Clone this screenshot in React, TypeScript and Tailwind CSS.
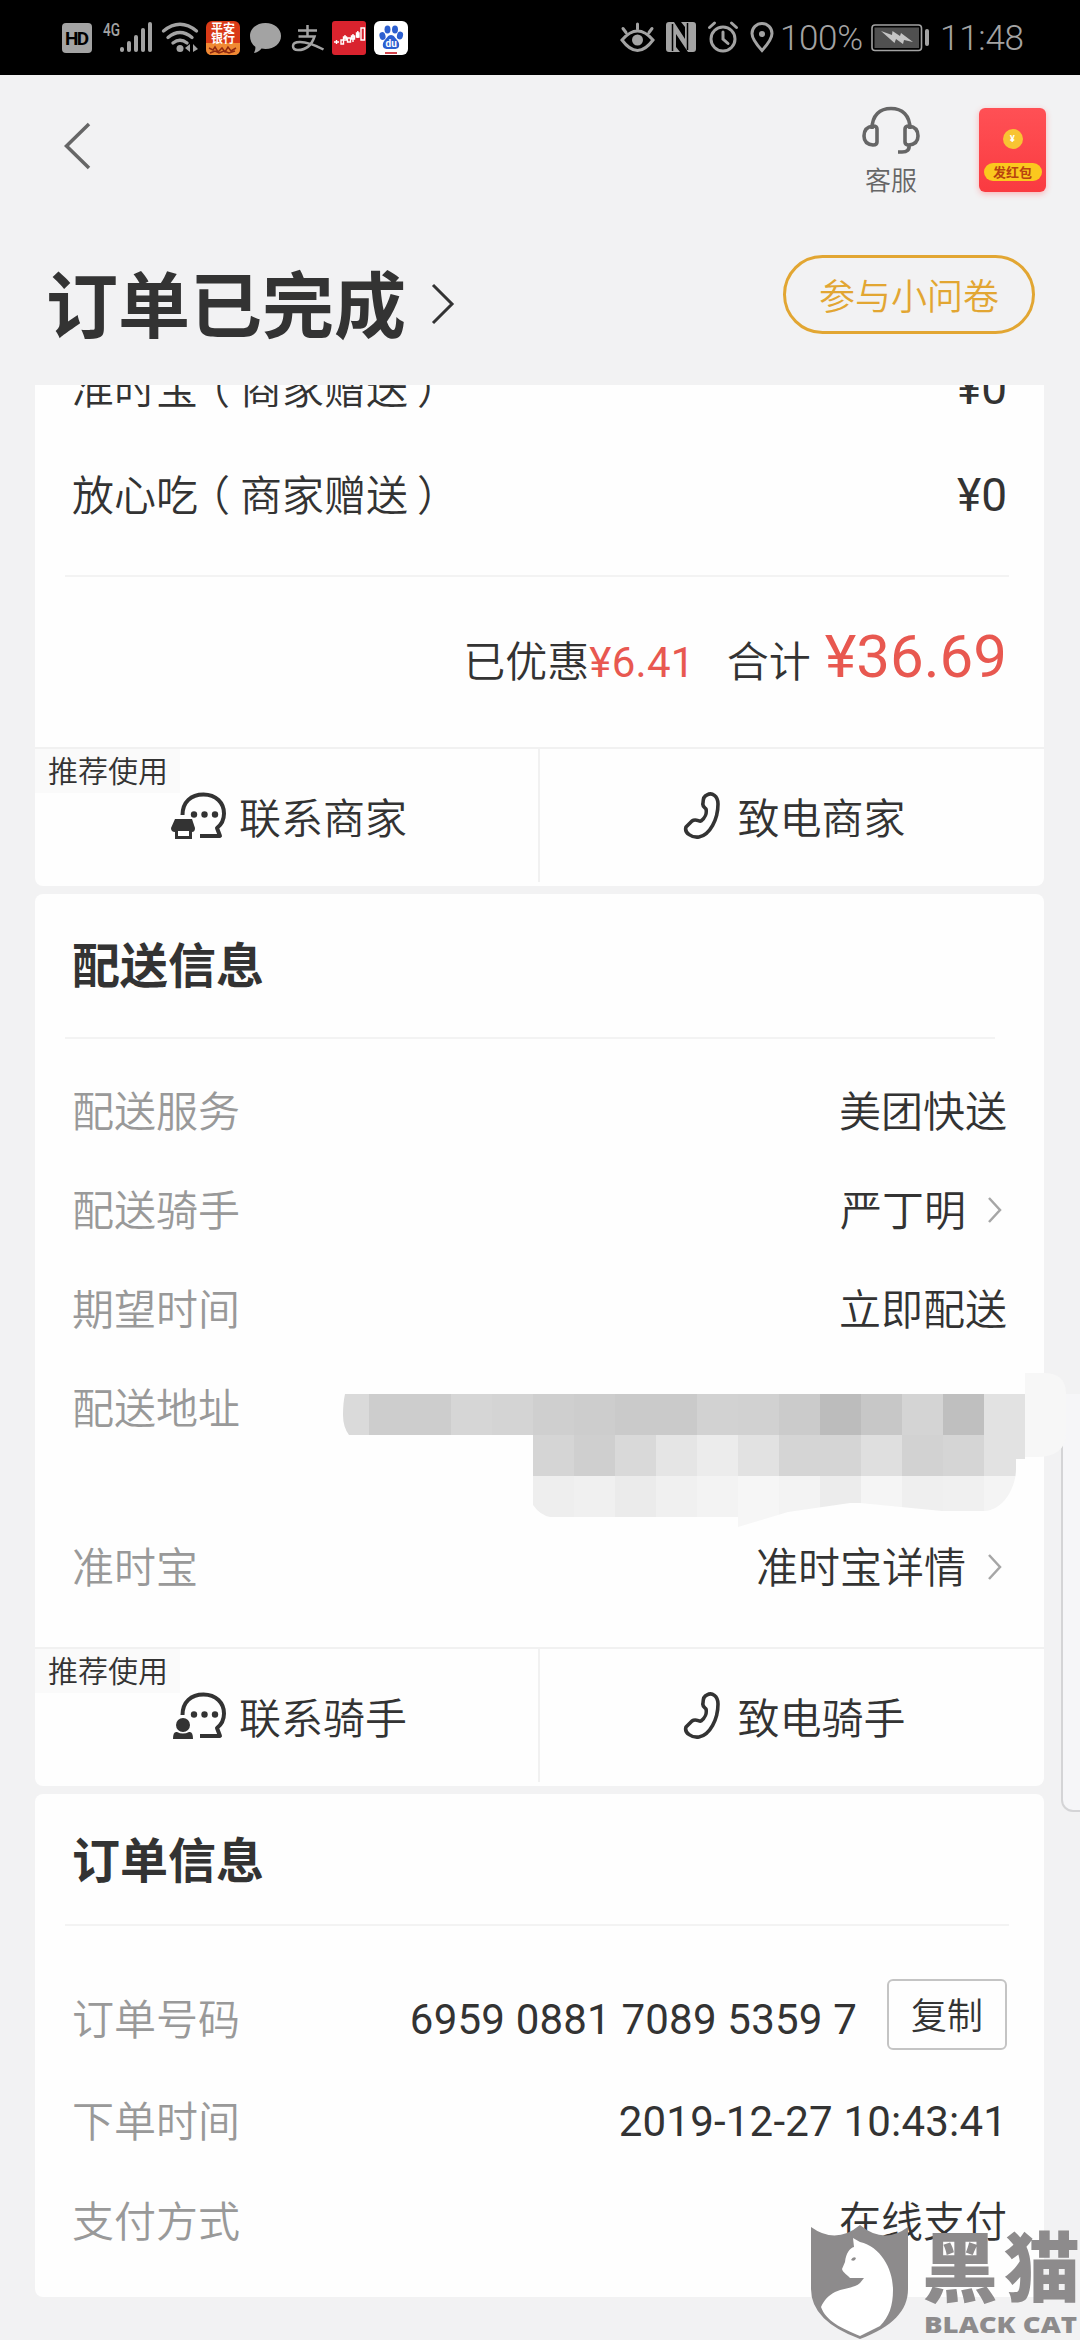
import type { ReactNode } from 'react';

type RowProps = { label: string; value?: string; arrow?: boolean; className: string };

const mosaic: string[][] = [
  ['#dadada', '#cdcdcd', '#cdcdcd', '#d6d6d6', '#d4d4d4', '#cfcfcf', '#cdcdcd', '#cacaca', '#cacaca', '#d2d2d2', '#d1d1d1', '#cbcbcb', '#bcbcbc', '#c7c7c7', '#d4d4d4', '#bfbfbf', '#e2e2e2'],
  ['', '', '', '', '', '#d5d5d5', '#cfcfcf', '#d9d9d9', '#e5e5e5', '#ececec', '#e2e2e2', '#d5d5d5', '#d5d5d5', '#dfdfdf', '#d2d2d2', '#d5d5d5', '#e2e2e2'],
  ['', '', '', '', '', '#eeeeee', '#f0f0f0', '#ebebeb', '#f0f0f0', '#f3f3f3', '#f6f6f6', '#f3f3f3', '#ececec', '#f5f5f5', '#efefef', '#f0f0f0', '#f4f4f4'],
];

function StatusBar() {
  return (
    <div className="flex h-[75px] shrink-0 bg-black text-[#a3a3a3]">
      <svg width="540" height="75" viewBox="0 0 540 75" fill="currentColor">
        <rect x="62" y="23" width="30" height="30" rx="4" />
        <text x="65" y="45" fontFamily="Roboto" fontSize="19" fontWeight="700" fill="#000" textLength="24">HD</text>
        <text x="103" y="36" fontFamily="Roboto" fontSize="19" fontWeight="500" textLength="17" lengthAdjust="spacingAndGlyphs">4G</text>
        <rect x="120" y="47" width="4" height="5" rx="2" />
        <rect x="127" y="41" width="4" height="11" rx="2" />
        <rect x="134" y="35" width="4" height="17" rx="2" />
        <rect x="141" y="28" width="4" height="24" rx="2" />
        <rect x="148" y="22" width="4" height="30" rx="2" />
        <g fill="none" stroke="currentColor" strokeWidth="3.4" strokeLinecap="round">
          <path d="M163.500 31 Q180 17.500 196.500 31" />
          <path d="M168 37.500 Q180 27.500 192 37.500" />
          <path d="M173 43 Q180 37.500 187 43" />
        </g>
        <circle cx="180" cy="48.500" r="3.500" />
        <path d="M190 44v8l-5-4zM193 44v8l5-3z" />
        <rect x="206" y="21" width="34" height="34" rx="6" fill="#d93a17" />
        <path d="M206 43h34v6q0 6-6 6h-22q-6 0-6-6z" fill="#f08a34" />
        <g fontFamily="Noto Sans CJK SC" fontWeight="700" fontSize="12" fill="#fff">
          <text x="211" y="32.500">平安</text>
          <text x="211" y="43">银行</text>
        </g>
        <path d="M209 48l4 2 2-3 3 5 4-4 3 4 3-5 3 4 5-3M210 53l5-2 4 2 5-2 5 2 6-2" fill="none" stroke="#8f2810" strokeWidth="1.500" />
        <path d="M265.500 23c9 0 15.500 5.700 15.500 13s-6.500 13-15.500 13q-2 0-4-.4-3 4-7.500 4.400 1.800-3 1.300-6.300Q250 43 250 36c0-7.300 6.500-13 15.500-13z" />
        <g fill="none" stroke="currentColor" strokeWidth="2.500">
          <path d="M298 30.500h19M307.500 25v11.500M298.500 36.500h16Q310 50 298 50q-5 0-5-4t7-4q9 0 23.500 7.500" />
        </g>
        <rect x="332" y="21" width="34" height="34" rx="3" fill="#d9232e" />
        <g stroke="#fff" strokeWidth="1.400" fill="none">
          <path d="M334 42h5M336.500 40v4M341 40h2.500v4H341zM345 35v4M343.500 37h3v3h-3zM347.500 38h3v4h-3zM353 34v8M351.500 36h3v3h-3zM356.500 33h2.500v4h-2.500zM357.800 31v7M361 28h3.500v12H361z" />
        </g>
        <rect x="374" y="21" width="34" height="34" rx="6" fill="#fff" />
        <g fill="#2c5fd0">
          <ellipse cx="382.500" cy="36" rx="3" ry="4" transform="rotate(-15 382.5 36)" />
          <ellipse cx="387.500" cy="29.500" rx="3" ry="4" />
          <ellipse cx="395" cy="29.500" rx="3" ry="4" />
          <ellipse cx="400" cy="35.500" rx="3" ry="4" transform="rotate(15 400 35.5)" />
          <path d="M391 35c3 0 4 3 6.500 5.500 2.500 3 2.500 8-2 8.500h-9c-4.500-.5-4.500-5.500-2-8.500 2.500-2.500 3.500-5.500 6.500-5.500z" />
        </g>
        <text x="385.500" y="47" fontFamily="Roboto" fontSize="10" fontWeight="700" fill="#fff">du</text>
        <rect x="385" y="52" width="12" height="2" fill="#d2434b" />
      </svg>
      <svg width="540" height="75" viewBox="540 0 540 75" fill="currentColor">
        <g fill="none" stroke="currentColor" strokeWidth="3" strokeLinecap="round">
          <path d="M622 40q15.500-18 31 0-15.500 21-31 0zM637.500 24v5M623 28.500l3 4M652 28.500l-3 4" />
          <circle cx="723" cy="39" r="12" />
          <path d="M723 32v7l5 4.500M709.500 27.500l5-4.500M736.500 27.500l-5-4.500" />
          <path d="M762 50.500q-10-11-10-17a10 10 0 0 1 20 0q0 6-10 17z" />
        </g>
        <circle cx="637.500" cy="40" r="5.500" />
        <circle cx="762" cy="34" r="3" />
        <path d="M669 22h5l11 17V27l-4-5h12q3 0 3 3v24q0 3-3 3h-5l-12-18v13l4 5h-11q-3 0-3-3V25q0-3 3-3z" />
        <path d="M672.500 24v27M687.500 23v27" stroke="#000" strokeWidth="1.500" />
        <text x="780" y="50" fontFamily="Roboto" fontSize="35" textLength="83">100%</text>
        <rect x="872" y="25" width="49.500" height="25.500" rx="3" fill="none" stroke="currentColor" strokeWidth="1.600" />
        <rect x="874.500" y="27.500" width="44.500" height="20.500" fill="#505050" />
        <path d="M881 31l11 4 .5-4 7.500 5 1-3 12 9-9-2-1 4-7-5-1.500 4z" fill="#c4c4c4" />
        <rect x="925" y="29" width="4" height="17" rx="2" />
        <text x="940" y="50" fontFamily="Roboto" fontSize="35" textLength="84">11:48</text>
      </svg>
    </div>
  );
}

function Arrow() {
  return (
    <svg width="16" height="26" viewBox="0 0 16 26" className="mr-1 mb-1 ml-[21px]" fill="none" stroke="#a6a6a6" strokeWidth="2.500">
      <path d="M2 1l11 12L2 25" />
    </svg>
  );
}

function Row({ label, value, arrow, className }: RowProps) {
  return (
    <div className={`flex items-center justify-between ${className}`}>
      <span className="text-[#999]">{label}</span>
      <span className="flex items-center">
        {value}
        {arrow && <Arrow />}
      </span>
    </div>
  );
}

function GiftRow({ name }: { name: string }) {
  return (
    <div className="flex h-[107px] shrink-0 items-center justify-between">
      <span className="mt-0.5">
        {name}
        <span className="mr-[10px] -ml-[10px]">（</span>
        商家赠送
        <span className="ml-[9px]">）</span>
      </span>
      <span className="mb-0.5 text-[46px] font-normal">¥0</span>
    </div>
  );
}

function Bubble({ children }: { children: ReactNode }) {
  return (
    <svg width="56" height="50" viewBox="0 0 56 50" className="mr-3 shrink-0" fill="none" stroke="#333" strokeWidth="4">
      <path d="M11.500 24C11.500 11 20 3.500 32.500 3.500S53 12 53 22.500c0 6-2.500 11-7 14.500l3 8H29" strokeLinejoin="round" />
      <g fill="#333" stroke="none">
        <circle cx="23" cy="23.500" r="3.200" />
        <circle cx="33.500" cy="23.500" r="3.200" />
        <circle cx="44" cy="23.500" r="3.200" />
        {children}
      </g>
    </svg>
  );
}

function Actions({ chat, call, icon }: { chat: string; call: string; icon: ReactNode }) {
  return (
    <div className="relative grid h-[139px] grid-cols-2 border-t-2 border-[#f1f1f1]">
      <span className="absolute top-0 left-0 h-11 w-[145px] bg-[#fafafa] pt-px pl-[13px] text-[30px] leading-[44px]">推荐使用</span>
      <div className="mb-1 flex items-center border-r-2 border-[#f1f1f1] pl-[136px]">
        <Bubble>{icon}</Bubble>
        <span className="mt-2">{chat}</span>
      </div>
      <div className="mb-1 flex items-center pl-[143px]">
        <svg width="38" height="48" viewBox="0 0 38 48" className="mr-[17px]" fill="none" stroke="#333" strokeWidth="3.600" strokeLinejoin="round">
          <path d="M24 3c5-3 11 1 11 9 0 15-8 31-19 33C9 46 1 41 3 35l6-6c4-3 7 1 9 0 4-3 6-8 5-12-2-2-4-3-3-6 0-3 1-7 4-8z" />
        </svg>
        <span className="mt-2">{call}</span>
      </div>
    </div>
  );
}

function AddressMosaic() {
  return (
    <svg width="740" height="160" viewBox="340 1370 740 160" className="absolute top-[1370px] left-[340px]">
      <clipPath id="brush">
        <path d="M345 1394h680v65h-9v10c0 20-14 42-32 42h-42l-82-8h-10l-62 9-50 15v-10H550q-10-2-17-12v-70H349q-6-8-6-20t2-21z" />
      </clipPath>
      <g clipPath="url(#brush)">
        {mosaic.map((line, r) =>
          line.map((fill, c) => fill && <rect key={`${r}-${c}`} x={328 + c * 41} y={1394 + r * 41} width="41.200" height={r === 2 ? 55 : 41} fill={fill} />),
        )}
      </g>
      <path d="M1025 1373h18q23 0 23 20v40q0 24-30 24h-11z" fill="#f7f7f7" />
    </svg>
  );
}

function BlackCat() {
  return (
    <svg width="269" height="115" viewBox="0 0 269 115" className="absolute top-[2225px] left-[811px]" fill="#8d8b8c">
      <path d="M0 2q25 18 49-2 24 20 48 2v62c0 22-16 38-48 50Q0 96 0 64z" />
      <path d="M42 13l7 4c21 5 33 27 33 48 0 16-4 27-13 36l-20 10C30 103 15 96 10 82c3-7 8-12 14-15 9-4 20-4 25-9l4-5H39c-2-3-7-5-8-9l3-7c1-9 5-14 9-15z" fill="#fff" />
      <path d="M40 35q2-4 5-2-1 4-5 2z" />
      <text x="111" y="71" fontFamily="Noto Sans CJK SC" fontSize="76" fontWeight="900" textLength="158">黑猫</text>
      <text x="113" y="108" fontFamily="Open Sans" fontSize="23" fontWeight="800" textLength="153" lengthAdjust="spacingAndGlyphs">BLACK CAT</text>
    </svg>
  );
}

export default function App() {
  return (
    <div className="relative flex h-[2340px] w-[1080px] flex-col overflow-hidden bg-[#f2f2f3] font-[Roboto,'Noto_Sans_CJK_SC',sans-serif] text-[42px] leading-none font-[350] text-[#333]">
      <StatusBar />

      {/* HEADER */}
      <header className="flex h-[310px] shrink-0 flex-col">
        <div className="flex h-[140px] items-start">
          <svg width="28" height="48" viewBox="0 0 28 48" className="mt-[47px] ml-[63px]" fill="none" stroke="#666" strokeWidth="3.500">
            <path d="M26 2L3.500 24 26 46" />
          </svg>
          <div className="mt-[31px] ml-[765px] flex w-[70px] flex-col items-center text-[26px] text-[#666]">
            <svg width="60" height="50" viewBox="0 0 60 50" fill="none" stroke="#666" strokeWidth="3.600">
              <path d="M11 23C11 9 19 2.500 30 2.500S49 9 49 23" />
              <path d="M16 23v13q0 3-4 3-9-1-9-9 0-9 9-10 4 0 4 3zM44 23v13q0 3 4 3 9-1 9-9 0-9-9-10-4 0-4 3z" />
              <path d="M48 39q1 7-7 7h-4" />
            </svg>
            <span className="mt-3 leading-[26px]">客服</span>
          </div>
          <div className="mt-[33px] ml-[53px] flex h-[84px] w-[67px] flex-col items-center rounded-md bg-gradient-to-b from-[#ff5055] to-[#fa3a40] shadow-[0_2px_6px_#f9b4b6]">
            <span className="mt-[21px] flex size-5 items-center justify-center rounded-full bg-[#f8c433] text-[9px] font-bold text-white">¥</span>
            <span className="mt-[14px] flex h-[18px] w-[58px] items-center justify-center rounded-full bg-[#fbc81e] text-[13px] font-bold text-[#b8420f]">发红包</span>
          </div>
        </div>
        <div className="flex h-[170px] items-start">
          <h1 className="mt-[57px] ml-[46px] text-[72px] leading-[72px] font-bold">订单已完成</h1>
          <svg width="24" height="42" viewBox="0 0 24 42" className="mt-[68px] ml-[25px]" fill="none" stroke="#333" strokeWidth="3">
            <path d="M2 2l19 19L2 40" />
          </svg>
          <button className="mt-[40px] ml-[328px] h-[79px] w-[252px] rounded-full border-3 border-[#e2a632] pt-1.5 text-[36px] text-[#e2a632]">
            参与小问卷
          </button>
        </div>
      </header>

      <main className="ml-[35px] flex w-[1009px] flex-1 flex-col overflow-hidden">
        {/* PRICE */}
        <section className="mb-2 flex flex-col rounded-b-lg bg-[#fefefe]">
          <div className="flex h-[362px] flex-col overflow-hidden px-[37px]">
            <div className="-mt-[50px] shrink-0">
              <GiftRow name="准时宝" />
              <GiftRow name="放心吃" />
            </div>
            <div className="-mr-[2px] -ml-[7px] mt-[26px] h-[2px] shrink-0 bg-[#f3f3f3]" />
            <div className="mt-[50px] flex items-baseline justify-end">
              <span>已优惠</span>
              <span className="font-normal tracking-[0.3px] text-[#e85850]">¥6.41</span>
              <span className="ml-[32px]">合计</span>
              <span className="ml-[14px] text-[60px] font-normal text-[#e85850]">¥36.69</span>
            </div>
          </div>
          <Actions
            chat="联系商家"
            call="致电商家"
            icon={
              <>
                <path d="M4 28h17l3 9q0 4-3 4v7H4v-7q-4 0-4-4z" />
                <path d="M7 40h11v5H7z" fill="#fff" />
              </>
            }
          />
        </section>

        {/* DELIVERY */}
        <section className="mb-2 flex flex-col rounded-lg bg-[#fefefe]">
          <div className="flex h-[753px] flex-col px-[37px]">
            <h2 className="mt-[49px] text-[48px] leading-[48px] font-bold">配送信息</h2>
            <div className="-ml-[7px] mt-[46px] mb-[24px] h-[2px] w-[930px] bg-[#f3f3f3]" />
            <Row className="h-[99px]" label="配送服务" value="美团快送" />
            <Row className="h-[99px]" label="配送骑手" value="严丁明" arrow />
            <Row className="h-[99px]" label="期望时间" value="立即配送" />
            <Row className="h-[99px]" label="配送地址" />
            <Row className="mt-[60px] h-[99px]" label="准时宝" value="准时宝详情" arrow />
          </div>
          <Actions
            chat="联系骑手"
            call="致电骑手"
            icon={
              <>
                <circle cx="12" cy="34" r="7" />
                <path d="M2 48q0-8 4-7 6 3 12 0 4-1 4 7z" />
              </>
            }
          />
        </section>

        {/* ORDER */}
        <section className="flex h-[503px] flex-col rounded-lg bg-[#fefefe] px-[37px]">
          <h2 className="mt-[44px] text-[48px] leading-[48px] font-bold">订单信息</h2>
          <div className="-mr-[2px] -ml-[7px] mt-[38px] mb-[43px] h-[2px] bg-[#f3f3f3]" />
          <div className="flex h-[99px] items-center">
            <span className="mt-1 text-[#999]">订单号码</span>
            <span className="mt-0.5 ml-auto font-normal tracking-[0.2px]">6959 0881 7089 5359 7</span>
            <button className="mb-2 ml-[30px] h-[71px] w-[120px] rounded-md border-2 border-[#c4c4c4] pt-1 text-[36px]">复制</button>
          </div>
          <div className="mt-px flex h-[104px] items-center justify-between">
            <span className="mt-1 text-[#999]">下单时间</span>
            <span className="mt-0.5 font-normal tracking-[0.2px]">2019-12-27 10:43:41</span>
          </div>
          <Row className="h-[99px]" label="支付方式" value="在线支付" />
        </section>
      </main>

      {/* floating drawer at the screen edge, then the blurred address above it */}
      <div className="absolute top-[1394px] left-[1061px] h-[418px] w-8 rounded-bl-xl border-2 border-t-0 border-[#d4d4d6] bg-[#f6f6f8]" />
      <AddressMosaic />
      <BlackCat />
    </div>
  );
}
